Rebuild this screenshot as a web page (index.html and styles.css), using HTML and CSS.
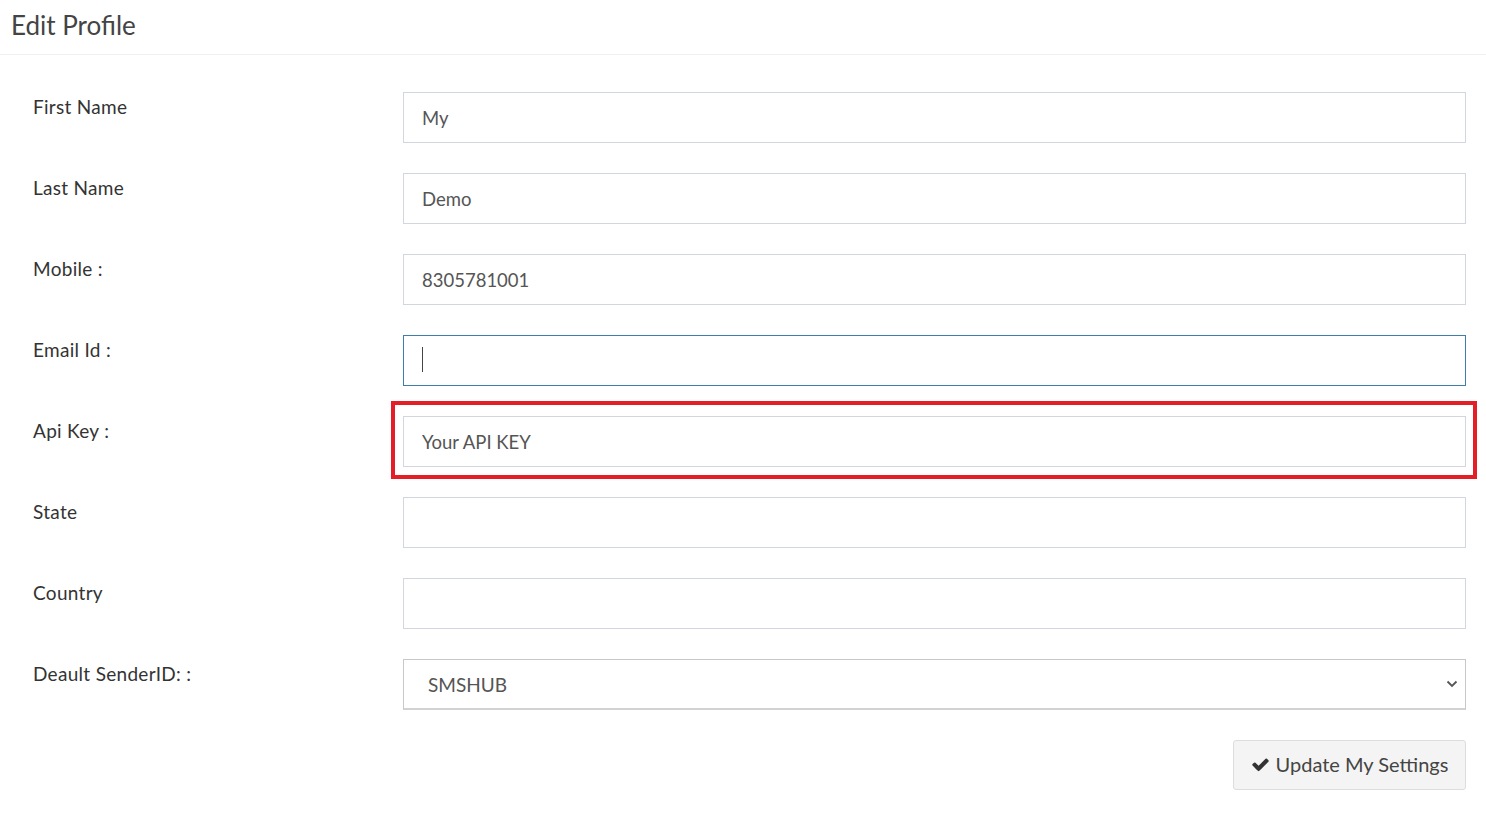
FILE: index.html
```html
<!DOCTYPE html>
<html lang="en">
<head>
<meta charset="utf-8">
<title>Edit Profile</title>
<link rel="stylesheet" href="styles.css">
</head>
<body>
<div class="box">
  <div class="box-header"><h3 class="box-title">Edit Profile</h3></div>
  <form class="form">
    <div class="row"><label class="label">First Name</label><div class="field"><input class="input" type="text" value="My"></div></div>
    <div class="row"><label class="label">Last Name</label><div class="field"><input class="input" type="text" value="Demo"></div></div>
    <div class="row"><label class="label">Mobile :</label><div class="field"><input class="input" type="text" value="8305781001"></div></div>
    <div class="row"><label class="label">Email Id :</label><div class="field"><input class="input input-focus" type="text" value=""><span class="caret"></span></div></div>
    <div class="row"><label class="label">Api Key :</label><div class="field field-highlight"><input class="input" type="text" value="Your API KEY"></div></div>
    <div class="row"><label class="label">State</label><div class="field"><input class="input" type="text" value=""></div></div>
    <div class="row"><label class="label">Country</label><div class="field"><input class="input" type="text" value=""></div></div>
    <div class="row"><label class="label">Deault SenderID: :</label><div class="field"><select class="select"><option>SMSHUB</option></select>
      <svg class="chev" viewBox="0 0 12 8" width="12" height="8"><path d="M1.5 1.5 L6 6 L10.5 1.5" fill="none" stroke="#555" stroke-width="1.8"/></svg></div></div>
    <div class="actions">
      <button type="button" class="btn"><svg class="check" viewBox="0 0 1792 1792" width="19" height="19"><path fill="#333" d="M1671 566q0 40-28 68l-724 724-136 136q-28 28-68 28t-68-28l-136-136-362-362q-28-28-28-68t28-68l136-136q28-28 68-28t68 28l294 295 656-657q28-28 68-28t68 28l136 136q28 28 28 68z"/></svg>Update My Settings</button>
    </div>
  </form>
</div>
</body>
</html>
```
FILE: styles.css
```css
* { box-sizing: border-box; }
body {
  margin: 0;
  background: #fff;
  font-family: Lato, "Open Sans", "Liberation Sans", sans-serif;
  color: #333;
}
.box-header {
  height: 55px;
  padding: 0 11px;
  border-bottom: 1px solid #f0f0f0;
  display: flex;
  align-items: center;
}
.box-title {
  margin: 0;
  font-size: 26px;
  font-weight: 400;
  color: #444;
  line-height: 1;
  padding-bottom: 4px;
}
.form {
  padding: 37px 20px 20px 33px;
  display: flex;
  flex-direction: column;
  gap: 30px;
}
.row {
  display: grid;
  grid-template-columns: 370px 1fr;
}
.label {
  font-size: 19px;
  letter-spacing: 0.3px;
  line-height: 30px;
  color: #333;
}
.field { position: relative; }
.input {
  display: block;
  width: 100%;
  height: 51px;
  border: 1px solid #d2d6de;
  padding: 0 18px;
  font-family: inherit;
  font-size: 18.5px;
  color: #555;
  background: #fff;
  outline: none;
}
.input-focus { border-color: #3d7faa; }
.caret {
  position: absolute;
  left: 19px;
  top: 12px;
  width: 1px;
  height: 25px;
  background: #444;
}
.field-highlight::after {
  content: "";
  position: absolute;
  top: -15px;
  left: -12px;
  right: -11px;
  bottom: -12px;
  border: 4px solid #e41e26;
  pointer-events: none;
}
.select {
  display: block;
  width: 100%;
  height: 51px;
  border: 1px solid #c8c8c8;
  border-bottom: 2px solid #d2d2d2;
  border-radius: 0;
  padding: 0 24px;
  font-family: inherit;
  font-size: 19px;
  color: #555;
  background: #fff;
  -webkit-appearance: none;
  appearance: none;
  outline: none;
}
.chev {
  position: absolute;
  right: 8px;
  top: 21px;
  pointer-events: none;
}
.actions {
  display: flex;
  justify-content: flex-end;
}
.btn {
  display: flex;
  align-items: center;
  gap: 6px;
  height: 50px;
  width: 233px;
  justify-content: center;
  background: #f4f4f4;
  border: 1px solid #ddd;
  border-radius: 3px;
  font-family: inherit;
  font-size: 20px;
  color: #444;
  padding: 0 16px 2px;
}
.check { flex: none; }
```
